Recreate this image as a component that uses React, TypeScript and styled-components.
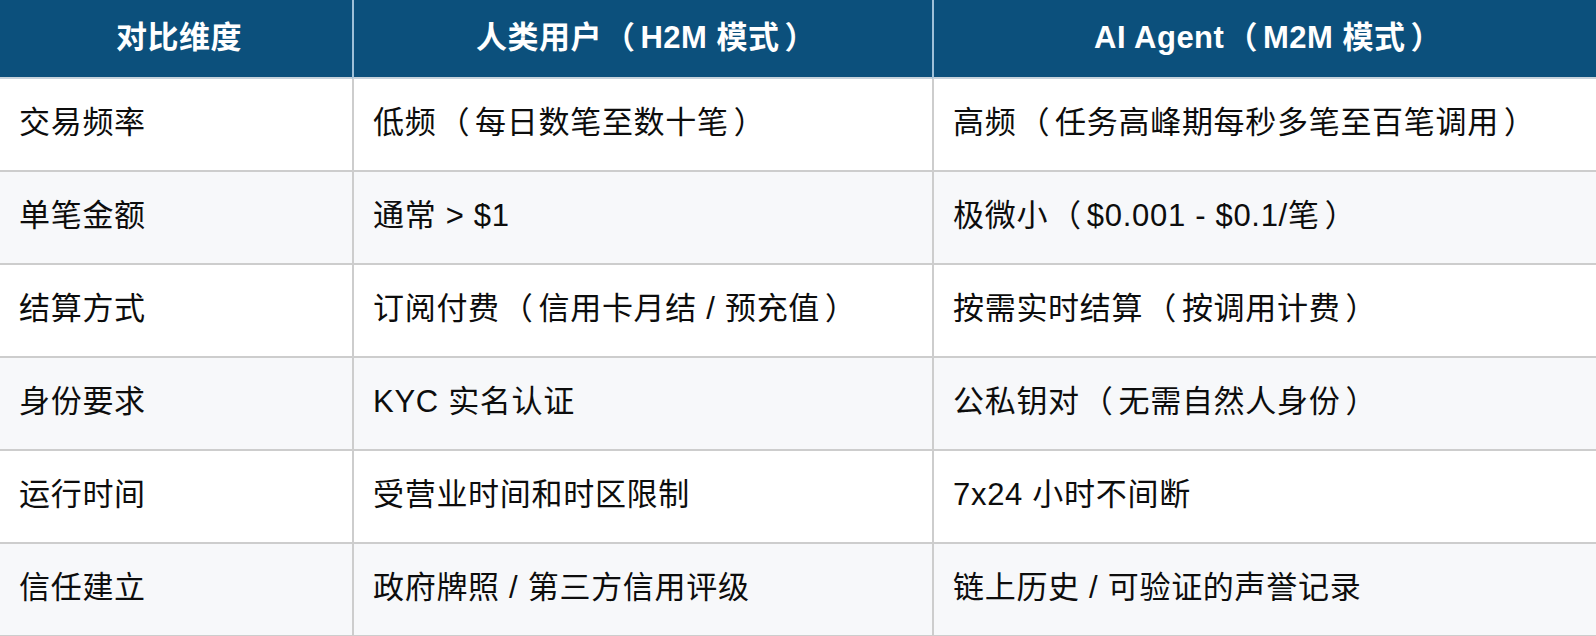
import React from "react";
import styled, { createGlobalStyle } from "styled-components";

const GlobalStyle = createGlobalStyle`
  html, body {
    margin: 0;
    padding: 0;
    background: #ffffff;
  }
  body {
    font-family: "Liberation Sans", "Noto Sans CJK SC", sans-serif;
    -webkit-font-smoothing: antialiased;
  }
`;

const headers = ["对比维度", "人类用户（H2M 模式）", "AI Agent（M2M 模式）"];

const rows = [
  ["交易频率", "低频（每日数笔至数十笔）", "高频（任务高峰期每秒多笔至百笔调用）"],
  ["单笔金额", "通常 > $1", "极微小（$0.001 - $0.1/笔）"],
  ["结算方式", "订阅付费（信用卡月结 / 预充值）", "按需实时结算（按调用计费）"],
  ["身份要求", "KYC 实名认证", "公私钥对（无需自然人身份）"],
  ["运行时间", "受营业时间和时区限制", "7x24 小时不间断"],
  ["信任建立", "政府牌照 / 第三方信用评级", "链上历史 / 可验证的声誉记录"],
];

const Table = styled.div`
  display: grid;
  grid-template-columns: 352px 580px 1fr;
  width: 100%;
  overflow: hidden;
`;

const HeadCell = styled.div<{ $first?: boolean }>`
  height: 77px;
  box-sizing: content-box;
  display: flex;
  align-items: center;
  justify-content: center;
  background: #0c507c;
  color: #ffffff;
  font-size: 31px;
  font-weight: 700;
  letter-spacing: 0.5px;
  line-height: 1;
  border-bottom: 2px solid #c9d3dc;
  border-left: ${(p) => (p.$first ? "none" : "2px solid #9fc0d8")};
  white-space: nowrap;

  & > span {
    position: relative;
    top: -1px;
    left: 3px;
  }
`;

const Cell = styled.div<{ $first?: boolean; $alt?: boolean }>`
  height: 93px;
  box-sizing: border-box;
  display: flex;
  align-items: center;
  padding: 0 0 4px 19px;
  background: ${(p) => (p.$alt ? "#f7f8fa" : "#ffffff")};
  color: #0d0d0d;
  font-size: 31px;
  letter-spacing: 0.7px;
  line-height: 1;
  border-bottom: 2px solid #cdcdcd;
  border-left: ${(p) => (p.$first ? "none" : "2px solid #cdcdcd")};
  white-space: nowrap;
`;

// full-width brackets sit a little looser in the original rendering
const Paren = styled.span<{ $open?: boolean }>`
  margin-left: ${(p) => (p.$open ? "2px" : "5px")};
  margin-right: ${(p) => (p.$open ? "5px" : "0")};
`;

const Text = ({ value }: { value: string }) => (
  <span>
    {value.split(/([（）])/).map((part, i) =>
      part === "（" || part === "）" ? (
        <Paren key={i} $open={part === "（"}>
          {part}
        </Paren>
      ) : (
        part
      )
    )}
  </span>
);

export default function App() {
  return (
    <>
      <GlobalStyle />
      <Table>
        {headers.map((h, i) => (
          <HeadCell key={h} $first={i === 0}>
            <Text value={h} />
          </HeadCell>
        ))}
        {rows.map((row, r) =>
          row.map((c, i) => (
            <Cell key={`${r}-${i}`} $first={i === 0} $alt={r % 2 === 1}>
              <Text value={c} />
            </Cell>
          ))
        )}
      </Table>
    </>
  );
}
